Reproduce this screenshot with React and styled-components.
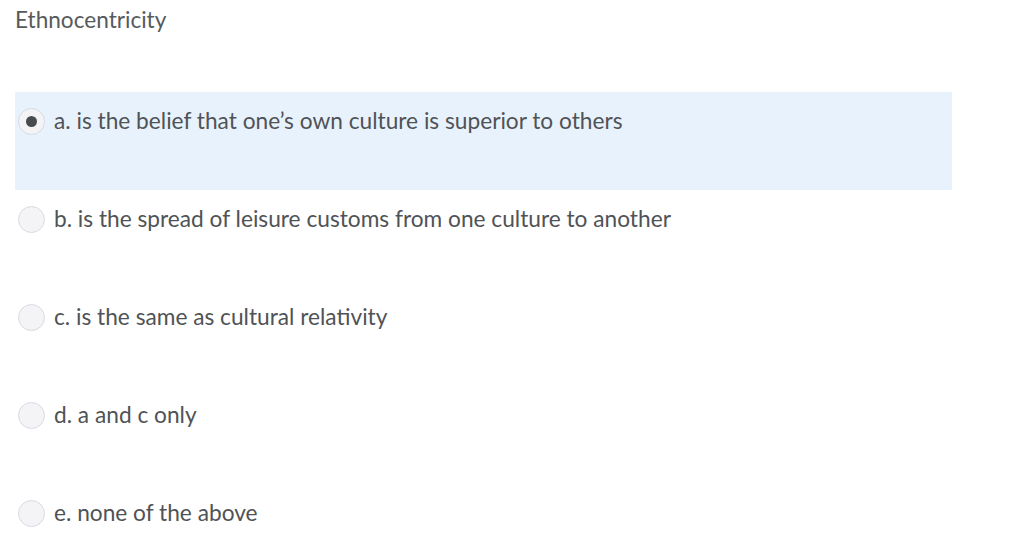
import React from "react";
import styled, { createGlobalStyle } from "styled-components";

const Global = createGlobalStyle`
  html, body { margin: 0; padding: 0; background: #fff; overflow: hidden; }
  body { font-family: Lato, "Noto Sans", sans-serif; }
`;

const Page = styled.div`
  padding: 7px 0 0 15px;
  width: 937px;
`;

const Title = styled.div`
  font-size: 22.6px;
  line-height: 26px;
  color: #565a5c;
  height: 85px;
`;

const List = styled.div`
  display: flex;
  flex-direction: column;
`;

const Row = styled.label`
  display: flex;
  align-items: flex-start;
  gap: 9px;
  height: 98px;
  box-sizing: border-box;
  padding: 16px 0 0 3px;
  background: ${(p) => (p.$selected ? "#e8f2fc" : "transparent")};
`;

const Radio = styled.span`
  flex: none;
  width: 27px;
  height: 27px;
  box-sizing: border-box;
  border-radius: 50%;
  border: 1px solid #d5dae3;
  background: #f4f4f6;
  display: flex;
  align-items: center;
  justify-content: center;
  &::after {
    content: "";
    display: ${(p) => (p.$checked ? "block" : "none")};
    width: 11px;
    height: 11px;
    border-radius: 50%;
    background: #494c4e;
  }
`;

const Text = styled.span`
  font-size: 22.7px;
  line-height: 26px;
  color: #505356;
`;

const options = [
  "a. is the belief that one\u2019s own culture is superior to others",
  "b. is the spread of leisure customs from one culture to another",
  "c. is the same as cultural relativity",
  "d. a and c only",
  "e. none of the above",
];

export default function App() {
  return (
    <>
      <Global />
      <Page>
        <Title>Ethnocentricity</Title>
        <List>
          {options.map((o, i) => (
            <Row key={i} $selected={i === 0}>
              <Radio $checked={i === 0} />
              <Text>{o}</Text>
            </Row>
          ))}
        </List>
      </Page>
    </>
  );
}
